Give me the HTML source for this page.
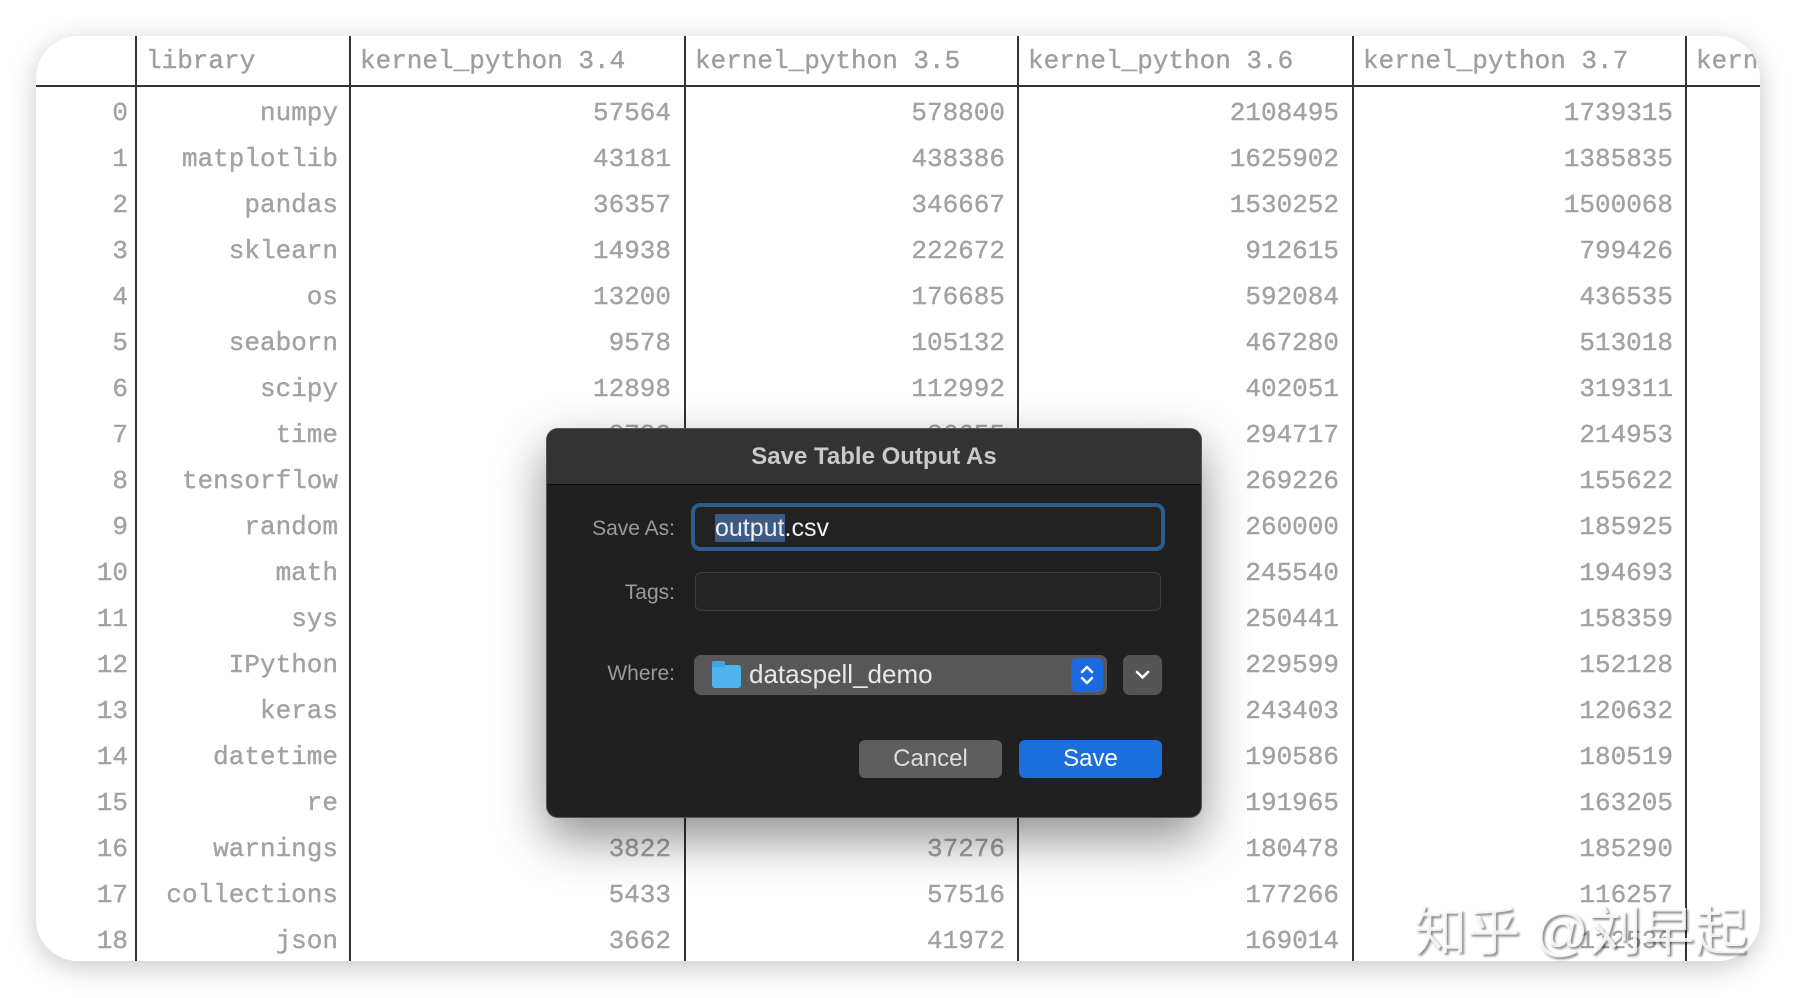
<!DOCTYPE html>
<html><head><meta charset="utf-8"><style>
*{margin:0;padding:0;box-sizing:border-box}
body{width:1796px;height:998px;background:#fff;position:relative;overflow:hidden;font-family:"Liberation Mono","DejaVu Sans Mono",monospace}
.card{position:absolute;left:36px;top:36px;width:1724px;height:925px;background:#fff;border-radius:42px;box-shadow:0 6px 28px rgba(0,0,0,.22);overflow:hidden}
.vl{position:absolute;top:0;bottom:0;width:2px;background:#333}
.hl{position:absolute;left:0;right:0;top:49px;height:2px;background:#333}
.t{position:absolute;font-size:26px;color:#a2a2a2;white-space:nowrap;line-height:30px;-webkit-text-stroke:0.4px #a2a2a2}
.h{color:#9e9e9e}
.dlg{position:absolute;left:546px;top:428px;width:656px;height:390px;background:#202020;border-radius:12px;border:1px solid #555;box-shadow:0 20px 50px rgba(0,0,0,.45);overflow:hidden;font-family:"Liberation Sans",sans-serif}
.title{height:56px;background:#333;border-bottom:1px solid #111;color:#c9c9c9;font-weight:bold;font-size:24px;text-align:center;line-height:56px}
.lbl{position:absolute;right:526px;color:#9a9a9a;font-size:21px}
</style></head><body>
<div class="card">
<div class="vl" style="left:99px"></div><div class="vl" style="left:313px"></div><div class="vl" style="left:648px"></div><div class="vl" style="left:981px"></div><div class="vl" style="left:1316px"></div><div class="vl" style="left:1649px"></div>
<div class="hl"></div>
<div class="t h" style="left:110px;top:10px">library</div>
<div class="t h" style="left:324px;top:10px">kernel_python 3.4</div>
<div class="t h" style="left:659px;top:10px">kernel_python 3.5</div>
<div class="t h" style="left:992px;top:10px">kernel_python 3.6</div>
<div class="t h" style="left:1327px;top:10px">kernel_python 3.7</div>
<div class="t h" style="left:1660px;top:10px">kern</div>
<div id="rows"></div>
</div>
<script>
var d=[["numpy",57564,578800,2108495,1739315],["matplotlib",43181,438386,1625902,1385835],["pandas",36357,346667,1530252,1500068],["sklearn",14938,222672,912615,799426],["os",13200,176685,592084,436535],["seaborn",9578,105132,467280,513018],["scipy",12898,112992,402051,319311],["time",8782,86655,294717,214953],["tensorflow","","",269226,155622],["random","","",260000,185925],["math","","",245540,194693],["sys","","",250441,158359],["IPython","","",229599,152128],["keras","","",243403,120632],["datetime","","",190586,180519],["re","","",191965,163205],["warnings",3822,37276,180478,185290],["collections",5433,57516,177266,116257],["json",3662,41972,169014,112536]];
var rights=[92,302,635,969,1303,1637],h="";
d.forEach(function(r,i){var y=62+i*46;var v=[i].concat(r);v.forEach(function(x,j){h+='<div class="t" style="right:'+(1724-rights[j])+'px;top:'+y+'px">'+x+'</div>'});});
document.getElementById("rows").innerHTML=h;
</script>
<div class="dlg">
<div class="title">Save Table Output As</div>
<div class="lbl" style="top:88px">Save As:</div>
<div style="position:absolute;left:144px;top:74px;width:474px;height:48px;border:4px solid #2d5d8c;border-radius:9px;background:#222"></div>
<div style="position:absolute;left:168px;top:84px;font-size:25px;color:#f0f0f0;line-height:30px"><span style="background:#3d5a84">output</span>.csv</div>
<div class="lbl" style="top:152px">Tags:</div>
<div style="position:absolute;left:148px;top:143px;width:466px;height:39px;border:1px solid #3d3d3d;border-radius:6px;background:#252525"></div>
<div class="lbl" style="top:233px">Where:</div>
<div style="position:absolute;left:147px;top:226px;width:413px;height:40px;border-radius:7px;background:#575757"></div>
<div style="position:absolute;left:165px;top:236px;width:29px;height:23px;background:#4fb3ee;border-radius:3px"></div>
<div style="position:absolute;left:165px;top:232px;width:13px;height:6px;background:#3ea6e6;border-radius:2px 2px 0 0"></div>
<div style="position:absolute;left:202px;top:229px;font-size:26px;color:#e8e8e8;line-height:32px">dataspell_demo</div>
<div style="position:absolute;left:524px;top:229px;width:32px;height:34px;background:#1c6ae0;border-radius:6px"><svg width="32" height="34" viewBox="0 0 32 34"><path d="M11 14l5-5 5 5M11 20l5 5 5-5" stroke="#fff" stroke-width="2.4" fill="none" stroke-linecap="round" stroke-linejoin="round"/></svg></div>
<div style="position:absolute;left:576px;top:226px;width:39px;height:40px;background:#555;border-radius:7px"><svg width="39" height="40" viewBox="0 0 39 40"><path d="M14 17l5.5 5.5 5.5-5.5" stroke="#fff" stroke-width="2.6" fill="none" stroke-linecap="round" stroke-linejoin="round"/></svg></div>
<div style="position:absolute;left:312px;top:311px;width:143px;height:38px;background:#5e5e5e;border-radius:6px;color:#ddd;font-size:24px;text-align:center;line-height:38px">Cancel</div>
<div style="position:absolute;left:472px;top:311px;width:143px;height:38px;background:#1b6fdc;border-radius:6px;color:#fff;font-size:24px;text-align:center;line-height:38px">Save</div>
</div>
<div style="position:absolute;left:1414px;top:890px;font-family:'Liberation Sans','Noto Sans CJK SC',sans-serif;font-size:53px;color:rgba(255,255,255,.85);text-shadow:2px 2px 2px rgba(0,0,0,.45);white-space:nowrap">知乎 @刘早起</div>
</body></html>
